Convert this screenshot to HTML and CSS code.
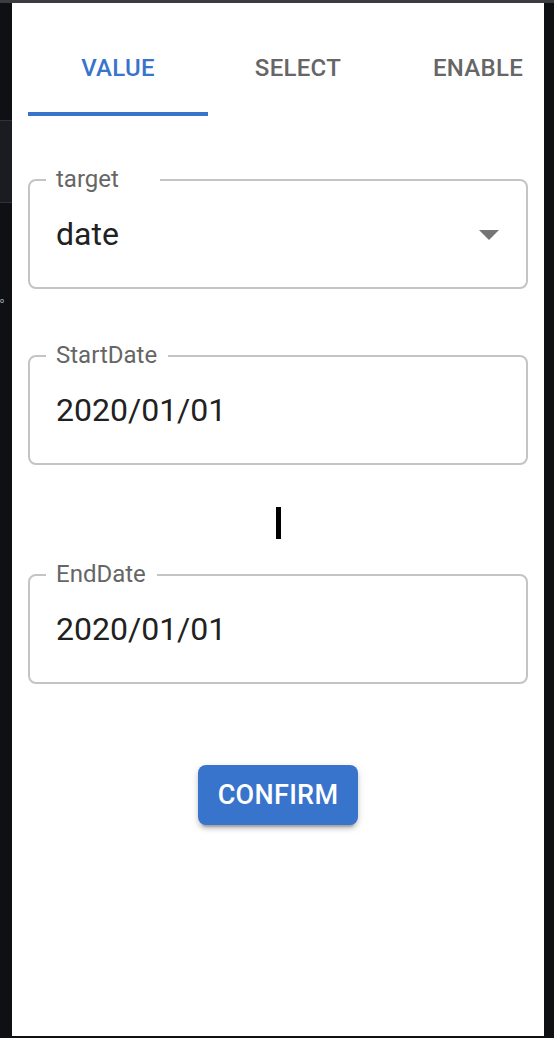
FILE: index.html
```html
<!DOCTYPE html>
<html lang="en">
<head>
<meta charset="utf-8">
<title>Filter</title>
<link rel="stylesheet" href="styles.css">
</head>
<body>
<div class="topbar"></div>
<div class="main">
  <div class="side side-left">
    <div class="band"></div>
    <span class="glyph">o</span>
  </div>
  <div class="panel">
    <div class="tabs">
      <div class="tab tab-active">Value</div>
      <div class="tab">Select</div>
      <div class="tab">Enable</div>
    </div>
    <form class="form">
      <fieldset class="field">
        <legend class="field-label field-label-wide">target</legend>
        <div class="field-value field-select">
          <span>date</span>
          <svg class="caret" width="20" height="10" viewBox="0 0 20 10"><path d="M0 0h20L10 10z" fill="#757575"/></svg>
        </div>
      </fieldset>
      <fieldset class="field field-mid">
        <legend class="field-label">StartDate</legend>
        <div class="field-value">2020/01/01</div>
      </fieldset>
      <div class="separator"><div class="separator-bar"></div></div>
      <fieldset class="field">
        <legend class="field-label">EndDate</legend>
        <div class="field-value">2020/01/01</div>
      </fieldset>
      <div class="actions">
        <button type="button" class="btn">Confirm</button>
      </div>
    </form>
  </div>
  <div class="side side-right"></div>
</div>
</body>
</html>
```
FILE: styles.css
```css
html, body {
  margin: 0;
  padding: 0;
}
body {
  width: 554px;
  height: 1038px;
  overflow: hidden;
  background: #0e1014;
  font-family: Roboto, "Liberation Sans", sans-serif;
}
.topbar {
  height: 3px;
  background: #3a3c40;
}
.main {
  display: flex;
  height: 1033px;
}
.side {
  background: #0e1014;
  overflow: hidden;
}
.side-left {
  width: 12px;
  display: flex;
  flex-direction: column;
}
.band {
  margin-top: 117px;
  height: 81px;
  background: #1a1c21;
  border-top: 1px solid #2f3238;
  border-bottom: 1px solid #2f3238;
}
.glyph {
  margin-top: 94px;
  margin-left: 0;
  color: #d0d0d0;
  font-size: 7px;
  line-height: 8px;
}
.side-right {
  width: 10px;
}
.panel {
  width: 532px;
  background: #fff;
  overflow: hidden;
  padding: 17px 16px 0;
  box-sizing: border-box;
}
.tabs {
  display: flex;
  height: 96px;
  width: 500px;
  overflow: hidden;
}
.tab {
  flex: 0 0 180px;
  display: flex;
  align-items: center;
  justify-content: center;
  font-size: 24px;
  font-weight: 500;
  text-transform: uppercase;
  letter-spacing: 0.3px;
  color: #666;
  box-sizing: border-box;
}
.tab-active {
  color: #3874cc;
  border-bottom: 4px solid #3874cc;
  padding-top: 4px;
}
.form {
  display: flex;
  flex-direction: column;
  margin-top: 49px;
}
.field {
  margin: 0;
  padding: 19px 26px 33px;
  border: 2px solid #c4c4c4;
  border-radius: 8px;
  min-width: 0;
  width: 500px;
  box-sizing: border-box;
}
.field-mid {
  margin-top: 52px;
}
.field-label {
  margin-left: -10px;
  padding: 0 11px 2px 10px;
  font-size: 24px;
  line-height: 28px;
  color: #666;
}
.field-label-wide {
  padding-right: 41px;
}
.field-value {
  font-size: 32px;
  line-height: 40px;
  color: #212121;
}
.field-select {
  display: flex;
  align-items: center;
  justify-content: space-between;
}
.caret {
  margin-right: 1px;
  margin-top: 2px;
}
.separator {
  height: 95px;
  display: flex;
  justify-content: center;
}
.separator-bar {
  margin-top: 42px;
  width: 5px;
  height: 32px;
  background: #000;
}
.actions {
  display: flex;
  justify-content: center;
  margin-top: 81px;
}
.btn {
  width: 160px;
  height: 60px;
  border: 0;
  border-radius: 8px;
  background: #3874cc;
  color: #fff;
  font-family: Roboto, "Liberation Sans", sans-serif;
  font-size: 27px;
  font-weight: 500;
  text-transform: uppercase;
  letter-spacing: 0.3px;
  box-shadow: 0 6px 2px -4px rgba(0,0,0,0.2), 0 4px 4px 0 rgba(0,0,0,0.14), 0 2px 10px 0 rgba(0,0,0,0.12);
  padding: 0;
}
```
